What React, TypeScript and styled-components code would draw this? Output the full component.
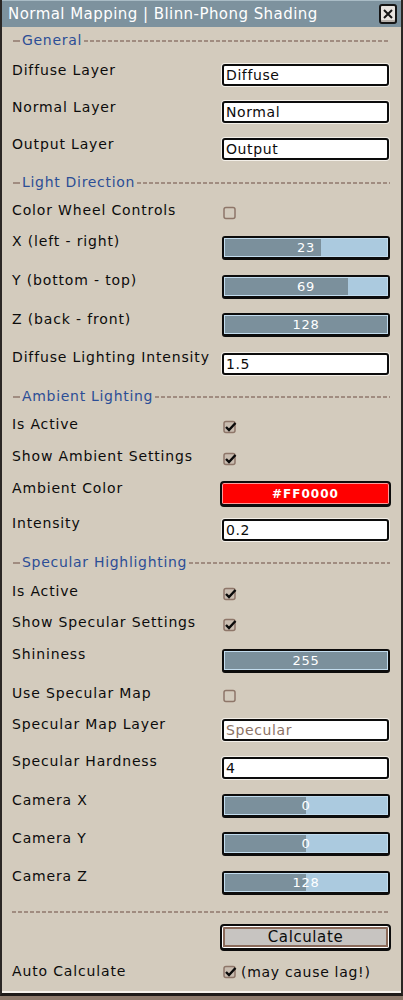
import React from "react";
import styled, { createGlobalStyle } from "styled-components";

const Global = createGlobalStyle`
  html, body { margin: 0; padding: 0; background: #8d7a6c; }
  body { font-family: "DejaVu Sans", "Noto Sans", sans-serif; }
`;

const Window = styled.div`
  width: 403px;
  height: 996px;
  box-sizing: border-box;
  display: flex;
  flex-direction: column;
  background: #d3cbbd;
  border-left: 2px solid #2a2624;
  border-right: 2px solid #2a2624;
  border-bottom: 3px solid #1e1a18;
`;

const TitleBar = styled.div`
  height: 27px;
  flex: none;
  display: flex;
  align-items: center;
  justify-content: space-between;
  padding: 0 4px 0 6px;
  background: #7d929e;
  border-top: 1px solid #a9bcc6;
  box-sizing: border-box;
`;

const TitleText = styled.span`
  color: #ffffff;
  font-size: 15px;
  letter-spacing: 0.45px;
`;

const CloseBox = styled.div`
  width: 18px;
  height: 20px;
  box-sizing: border-box;
  display: flex;
  align-items: center;
  justify-content: center;
  background: #e8e4e0;
  border: 2px solid #151515;
  border-radius: 3px;
  box-shadow: inset 0 -2px 0 #b8b2ac;
`;

const Body = styled.div`
  flex: 1;
  display: flex;
  flex-direction: column;
  padding-left: 10px;
  border-bottom: 2px solid #f6f2ec;
`;

const Row = styled.div<{ $h: number }>`
  height: ${(p) => p.$h}px;
  flex: none;
  display: grid;
  grid-template-columns: 210px 168px;
  align-items: center;
`;

const Label = styled.span<{ $lift: number }>`
  font-size: 14px;
  letter-spacing: 0.85px;
  color: #0c0c0c;
  padding-bottom: ${(p) => p.$lift}px;
  white-space: nowrap;
`;

const Header = styled.div<{ $h: number }>`
  height: ${(p) => p.$h}px;
  flex: none;
  display: flex;
  align-items: center;
  gap: 2px;
  padding-right: 11px;
`;

const Dash = styled.span`
  width: 7px;
  height: 2px;
  background: #a08c80;
  margin-left: 1px;
`;

const HeaderText = styled.span`
  color: #2c4e96;
  font-size: 14px;
  letter-spacing: 0.7px;
  padding-bottom: 2px;
`;

const DashLine = styled.span`
  flex: 1;
  height: 2px;
  background: repeating-linear-gradient(to right, #a08c80 0 4px, transparent 4px 6px);
`;

const TextBox = styled.div<{ $muted?: boolean }>`
  width: 167px;
  height: 22px;
  box-sizing: border-box;
  border: 2px solid #0c0c0c;
  border-radius: 3px;
  background: #ffffff;
  box-shadow: 0 0 0 1px #f3efe8;
  padding-left: 2px;
  font-size: 14px;
  letter-spacing: 0.6px;
  line-height: 18px;
  color: ${(p) => (p.$muted ? "#8c7264" : "#0c0c0c")};
`;

const Slider = styled.div`
  width: 168px;
  height: 24px;
  box-sizing: border-box;
  border: 2px solid #0c0c0c;
  border-bottom-width: 3px;
  border-radius: 3px;
  display: flex;
`;

const Track = styled.div`
  flex: 1;
  border: 1px solid #c2dcee;
  display: flex;
  align-items: center;
  justify-content: center;
  color: #ffffff;
  font-size: 13px;
  letter-spacing: 0.8px;
`;

const ColorButton = styled.div`
  width: 171px;
  height: 26px;
  margin-left: -2px;
  box-sizing: border-box;
  border: 2px solid #0c0c0c;
  border-bottom-width: 3px;
  border-radius: 4px;
  background: #ff0000;
  box-shadow: inset 0 0 0 1px #ff9a9a;
  display: flex;
  align-items: center;
  justify-content: center;
  color: #ffffff;
  font-size: 12px;
  font-weight: bold;
  letter-spacing: 1px;
`;

const CalcButton = styled.div`
  width: 171px;
  height: 27px;
  margin-left: -2px;
  box-sizing: border-box;
  border: 2px solid #0c0c0c;
  border-bottom-width: 3px;
  border-radius: 4px;
  background: #c7c4c1;
  box-shadow: inset 0 0 0 1px #ffffff, inset 0 0 0 3px #8a6a5a;
  display: flex;
  align-items: center;
  justify-content: center;
  color: #0c0c0c;
  font-size: 15px;
  letter-spacing: 0.6px;
`;

const CheckWrap = styled.div`
  display: flex;
  align-items: center;
  gap: 4px;
  padding-left: 1px;
`;

const Note = styled.span`
  font-size: 14px;
  letter-spacing: 0.7px;
  color: #0c0c0c;
`;

const Separator = styled.div`
  height: 20px;
  flex: none;
  display: flex;
  align-items: center;
  padding-right: 11px;
`;

const Check = ({ on }: { on: boolean }) => (
  <svg width="14" height="14" viewBox="0 0 14 14">
    <rect
      x="1"
      y="1.5"
      width="11"
      height="11"
      rx="2"
      fill={on ? "#c9bdb0" : "none"}
      stroke="#8e7669"
      strokeWidth="1.5"
    />
    {on && (
      <path d="M3 7 L6 10 L12.5 3" fill="none" stroke="#0a0a0a" strokeWidth="2.4" />
    )}
  </svg>
);

const SliderCtl = ({ value, frac }: { value: string; frac: number }) => {
  const p = Math.round(frac * 1000) / 10;
  return (
    <Slider>
      <Track
        style={{
          background: `linear-gradient(to right, #7b909c ${p}%, #abcadf ${p}%)`,
        }}
      >
        {value}
      </Track>
    </Slider>
  );
};

const Sec = ({ title, h }: { title: string; h: number }) => (
  <Header $h={h}>
    <Dash />
    <HeaderText>{title}</HeaderText>
    <DashLine />
  </Header>
);

export default function App() {
  return (
    <>
      <Global />
      <Window>
        <TitleBar>
          <TitleText>Normal Mapping | Blinn-Phong Shading</TitleText>
          <CloseBox>
            <svg width="10" height="10" viewBox="0 0 10 10">
              <path d="M1 1 L9 9 M9 1 L1 9" stroke="#151515" strokeWidth="2" />
            </svg>
          </CloseBox>
        </TitleBar>
        <Body>
          <Sec title="General" h={28} />
          <Row $h={39}>
            <Label $lift={10}>Diffuse Layer</Label>
            <TextBox>Diffuse</TextBox>
          </Row>
          <Row $h={36}>
            <Label $lift={10}>Normal Layer</Label>
            <TextBox>Normal</TextBox>
          </Row>
          <Row $h={37}>
            <Label $lift={10}>Output Layer</Label>
            <TextBox>Output</TextBox>
          </Row>

          <Sec title="Light Direction" h={31} />
          <Row $h={29}>
            <Label $lift={5}>Color Wheel Controls</Label>
            <CheckWrap>
              <Check on={false} />
            </CheckWrap>
          </Row>
          <Row $h={41}>
            <Label $lift={13}>X (left - right)</Label>
            <SliderCtl value="23" frac={0.595} />
          </Row>
          <Row $h={37}>
            <Label $lift={13}>Y (bottom - top)</Label>
            <SliderCtl value="69" frac={0.76} />
          </Row>
          <Row $h={40}>
            <Label $lift={12}>Z (back - front)</Label>
            <SliderCtl value="128" frac={1} />
          </Row>
          <Row $h={37}>
            <Label $lift={13}>Diffuse Lighting Intensity</Label>
            <TextBox>1.5</TextBox>
          </Row>

          <Sec title="Ambient Lighting" h={30} />
          <Row $h={30}>
            <Label $lift={6}>Is Active</Label>
            <CheckWrap>
              <Check on />
            </CheckWrap>
          </Row>
          <Row $h={34}>
            <Label $lift={6}>Show Ambient Settings</Label>
            <CheckWrap>
              <Check on />
            </CheckWrap>
          </Row>
          <Row $h={36}>
            <Label $lift={12}>Ambient Color</Label>
            <ColorButton>#FF0000</ColorButton>
          </Row>
          <Row $h={35}>
            <Label $lift={13}>Intensity</Label>
            <TextBox>0.2</TextBox>
          </Row>

          <Sec title="Specular Highlighting" h={32} />
          <Row $h={29}>
            <Label $lift={5}>Is Active</Label>
            <CheckWrap>
              <Check on />
            </CheckWrap>
          </Row>
          <Row $h={34}>
            <Label $lift={6}>Show Specular Settings</Label>
            <CheckWrap>
              <Check on />
            </CheckWrap>
          </Row>
          <Row $h={37}>
            <Label $lift={13}>Shininess</Label>
            <SliderCtl value="255" frac={1} />
          </Row>
          <Row $h={33}>
            <Label $lift={6}>Use Specular Map</Label>
            <CheckWrap>
              <Check on={false} />
            </CheckWrap>
          </Row>
          <Row $h={36}>
            <Label $lift={12}>Specular Map Layer</Label>
            <TextBox $muted>Specular</TextBox>
          </Row>
          <Row $h={39}>
            <Label $lift={13}>Specular Hardness</Label>
            <TextBox>4</TextBox>
          </Row>
          <Row $h={38}>
            <Label $lift={12}>Camera X</Label>
            <SliderCtl value="0" frac={0.5} />
          </Row>
          <Row $h={38}>
            <Label $lift={13}>Camera Y</Label>
            <SliderCtl value="0" frac={0.5} />
          </Row>
          <Row $h={39}>
            <Label $lift={13}>Camera Z</Label>
            <SliderCtl value="128" frac={0.5} />
          </Row>

          <Separator>
            <DashLine />
          </Separator>
          <Row $h={31}>
            <span />
            <CalcButton>Calculate</CalcButton>
          </Row>
          <Row $h={37}>
            <Label $lift={2}>Auto Calculate</Label>
            <CheckWrap>
              <Check on />
              <Note>(may cause lag!)</Note>
            </CheckWrap>
          </Row>
        </Body>
      </Window>
    </>
  );
}
